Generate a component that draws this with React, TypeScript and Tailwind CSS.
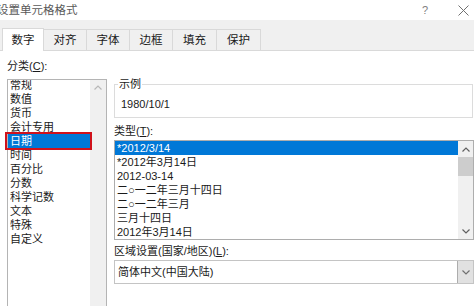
import React from "react";

const Up = ({ c = "#606060" }: { c?: string }) => (
  <svg width="8" height="5" viewBox="0 0 8 5">
    <polyline points="0.5,4.5 4,1 7.5,4.5" fill="none" stroke={c} strokeWidth="1.2" />
  </svg>
);
const Down = ({ c = "#606060" }: { c?: string }) => (
  <svg width="8" height="5" viewBox="0 0 8 5">
    <polyline points="0.5,0.5 4,4 7.5,0.5" fill="none" stroke={c} strokeWidth="1.2" />
  </svg>
);

const categories = ["常规", "数值", "货币", "会计专用", "日期", "时间", "百分比", "分数", "科学记数", "文本", "特殊", "自定义"];
const types = ["*2012/3/14", "*2012年3月14日", "2012-03-14", "二○一二年三月十四日", "二○一二年三月", "三月十四日", "2012年3月14日"];
const tabs = ["数字", "对齐", "字体", "边框", "填充", "保护"];
const tabW = ["w-[42px]", "w-[43px]", "w-[43px]", "w-[43px]", "w-[44px]", "w-[44px]"];

export default function App() {
  return (
    <div className="w-[474px] h-[306px] overflow-hidden bg-white relative text-[11px] leading-[14px] text-[#1a1a1a] font-['Liberation_Sans','Noto_Sans_CJK_SC',sans-serif]">
      {/* title bar */}
      <div className="h-[20px] flex items-center justify-between">
        <span className="ml-[-3px] text-[11.5px] text-[#5a5a5a]">设置单元格格式</span>
        <div className="flex items-center gap-[30px] pr-[5px] text-[#808080]">
          <span className="text-[11px]">?</span>
          <svg width="11" height="11" viewBox="0 0 11 11">
            <path d="M0.5 0.5 L10.5 10.5 M10.5 0.5 L0.5 10.5" stroke="#707070" strokeWidth="1" />
          </svg>
        </div>
      </div>
      {/* tab strip */}
      <div className="h-[31px] bg-[#f0f0f0] border-b border-[#d9d9d9] flex items-end pl-[2px] text-[11.5px]">
        {tabs.map((t, i) =>
          i === 0 ? (
            <div
              key={t}
              className={`${tabW[i]} h-[23px] mb-[-1px] bg-white border border-b-0 border-[#d9d9d9] flex items-center justify-center`}
            >
              {t}
            </div>
          ) : (
            <div
              key={t}
              className={`${tabW[i]} h-[21px] border-t border-r border-[#d9d9d9] flex items-center justify-center`}
            >
              {t}
            </div>
          )
        )}
      </div>
      {/* content */}
      <div className="flex">
        {/* left column */}
        <div className="ml-[7px] w-[100px] flex flex-col">
          <div className="mt-[8px] h-[14px]">
            分类(<span className="underline">C</span>):
          </div>
          <div className="mt-[6px] h-[240px] border border-[#b4b4b4] flex">
            <div className="flex-1 overflow-hidden">
              <div className="mt-[-2px]">
                {categories.map((c) => (
                  <div
                    key={c}
                    className={`h-[14px] pl-[2px] flex items-center ${c === "日期" ? "bg-[#0078d7] text-white" : ""}`}
                  >
                    {c}
                  </div>
                ))}
              </div>
            </div>
            <div className="w-[16px] bg-[#f0f0f0] flex flex-col items-center pt-[5px]">
              <Up c="#b8b8b8" />
            </div>
          </div>
        </div>
        {/* right column */}
        <div className="ml-[7px] w-[360px] flex flex-col">
          <div className="mt-[33px] h-[34px] w-[359px] border border-[#dcdcdc] relative">
            <span className="absolute left-[3px] top-[-8px] bg-white px-[1px]">示例</span>
            <div className="pl-[6px] pt-[12px]">1980/10/1</div>
          </div>
          <div className="mt-[6px] h-[14px]">
            类型(<span className="underline">T</span>):
          </div>
          <div className="mt-[2px] h-[100px] border border-[#adadad] flex">
            <div className="flex-1 overflow-hidden">
              {types.map((t, i) => (
                <div
                  key={t}
                  className={`h-[14px] pl-[2px] flex items-center ${i === 0 ? "bg-[#0078d7] text-white" : ""}`}
                >
                  {t}
                </div>
              ))}
            </div>
            <div className="w-[15px] bg-[#f0f0f0] flex flex-col">
              <div className="h-[16px] flex items-center justify-center">
                <Up />
              </div>
              <div className="h-[19px] bg-[#cdcdcd]" />
              <div className="flex-1" />
              <div className="h-[16px] flex items-center justify-center">
                <Down />
              </div>
            </div>
          </div>
          <div className="mt-[4px] h-[14px]">
            区域设置(国家/地区)(<span className="underline">L</span>):
          </div>
          <div className="mt-[2px] h-[24px] border border-[#c4c4c4] flex">
            <div className="flex-1 pl-[3px] flex items-center">简体中文(中国大陆)</div>
            <div className="w-[16px] bg-[#e1e1e1] border-l border-[#adadad] flex items-center justify-center">
              <Down c="#707070" />
            </div>
          </div>
        </div>
      </div>
      {/* red annotation box */}
      <div className="absolute left-[5px] top-[132px] w-[87px] h-[18px] border-2 border-[#d0121b]" />
    </div>
  );
}
